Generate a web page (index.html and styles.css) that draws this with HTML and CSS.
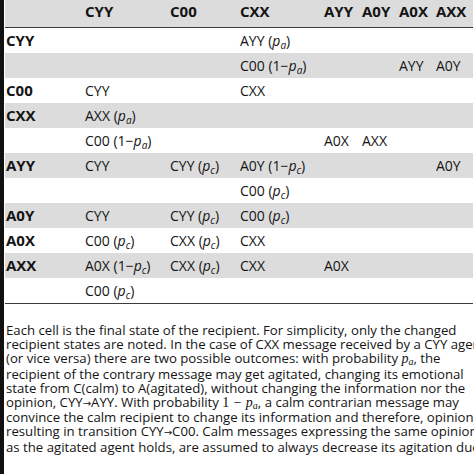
FILE: index.html
```html
<!DOCTYPE html>
<html>
<head>
<meta charset="utf-8">
<link rel="stylesheet" href="styles.css">
</head>
<body>
<div class="page">
  <div class="edge"></div>
  <div class="content">
    <table class="states">
      <colgroup>
        <col class="c0"><col class="c1"><col class="c2"><col class="c3"><col class="c4"><col class="c5"><col class="c6"><col class="c7">
      </colgroup>
      <thead>
        <tr><th></th><th>CYY</th><th>C00</th><th>CXX</th><th>AYY</th><th>A0Y</th><th>A0X</th><th>AXX</th></tr>
      </thead>
      <tbody>
        <tr><th>CYY</th><td></td><td></td><td>AYY (<i>p<sub>a</sub></i>)</td><td></td><td></td><td></td><td></td></tr>
        <tr class="g"><th></th><td></td><td></td><td>C00 (1−<i>p<sub>a</sub></i>)</td><td></td><td></td><td>AYY</td><td>A0Y</td></tr>
        <tr><th>C00</th><td>CYY</td><td></td><td>CXX</td><td></td><td></td><td></td><td></td></tr>
        <tr class="g"><th>CXX</th><td>AXX (<i>p<sub>a</sub></i>)</td><td></td><td></td><td></td><td></td><td></td><td></td></tr>
        <tr><th></th><td>C00 (1−<i>p<sub>a</sub></i>)</td><td></td><td></td><td>A0X</td><td>AXX</td><td></td><td></td></tr>
        <tr class="g"><th>AYY</th><td>CYY</td><td>CYY (<i>p<sub>c</sub></i>)</td><td>A0Y (1−<i>p<sub>c</sub></i>)</td><td></td><td></td><td></td><td>A0Y</td></tr>
        <tr><th></th><td></td><td></td><td>C00 (<i>p<sub>c</sub></i>)</td><td></td><td></td><td></td><td></td></tr>
        <tr class="g"><th>A0Y</th><td>CYY</td><td>CYY (<i>p<sub>c</sub></i>)</td><td>C00 (<i>p<sub>c</sub></i>)</td><td></td><td></td><td></td><td></td></tr>
        <tr><th>A0X</th><td>C00 (<i>p<sub>c</sub></i>)</td><td>CXX (<i>p<sub>c</sub></i>)</td><td>CXX</td><td></td><td></td><td></td><td></td></tr>
        <tr class="g"><th>AXX</th><td>A0X (1−<i>p<sub>c</sub></i>)</td><td>CXX (<i>p<sub>c</sub></i>)</td><td>CXX</td><td>A0X</td><td></td><td></td><td></td></tr>
        <tr><th></th><td>C00 (<i>p<sub>c</sub></i>)</td><td></td><td></td><td></td><td></td><td></td><td></td></tr>
      </tbody>
    </table>
    <p class="caption">Each cell is the final state of the recipient. For simplicity, only the changed<br>recipient states are noted. In the case of CXX message received by a CYY agent<br>(or vice versa) there are two possible outcomes: with probability <span class="m">p<sub>a</sub></span>, the<br>recipient of the contrary message may get agitated, changing its emotional<br>state from C(calm) to A(agitated), without changing the information nor the<br>opinion, CYY<span class="arr">→</span>AYY. With probability <span class="m"><span class="up">1</span> − p<sub>a</sub></span>, a calm contrarian message may<br>convince the calm recipient to change its information and therefore, opinion,<br>resulting in transition CYY<span class="arr">→</span>C00. Calm messages expressing the same opinion<br>as the agitated agent holds, are assumed to always decrease its agitation due to</p>
  </div>
</div>
</body>
</html>
```

FILE: styles.css
```css
html, body {
  margin: 0;
  padding: 0;
  background: #ffffff;
  overflow: hidden;
}
.page {
  display: flex;
  width: 520px;
  height: 474px;
  font-family: "Open Sans", "DejaVu Sans", sans-serif;
  color: #141414;
}
.edge {
  width: 4px;
  background: #111111;
  flex: none;
}
.content {
  padding-left: 1px;
  flex: none;
  width: 510px;
}
.states {
  border-collapse: collapse;
  table-layout: fixed;
  width: 468px;
  font-size: 14px;
  border-bottom: 1.5px solid #3c3c3c;
}
.c0 { width: 79px; }
.c1 { width: 85px; }
.c2 { width: 70px; }
.c3 { width: 84px; }
.c4 { width: 38px; }
.c5 { width: 37px; }
.c6 { width: 37px; }
.c7 { width: 38px; }
.states th, .states td {
  padding: 0 0 0 1px;
  text-align: left;
  white-space: nowrap;
  height: 25px;
  line-height: 25px;
  font-weight: 400;
}
.states th {
  font-size: 15px;
  font-weight: 700;
}
.states thead th {
  background: #dcdcdc;
  height: 22px;
  line-height: 22px;
  padding-bottom: 5px;
  border-bottom: 1.5px solid #3c3c3c;
}
.states tr.g th, .states tr.g td {
  background: #dcdcdc;
}
.states i {
  font-style: italic;
}
.states sub {
  font-size: 10px;
  line-height: 0;
  vertical-align: -3px;
}
.caption {
  margin: 19px 0 0 1px;
  font-size: 13.2px;
  line-height: 14.2px;
  white-space: nowrap;
}
.caption .m {
  font-family: "Liberation Serif", "DejaVu Serif", serif;
  font-style: italic;
  font-size: 14px;
}
.caption .m .up {
  font-style: normal;
}
.caption .m sub {
  font-size: 10px;
  line-height: 0;
  vertical-align: -2px;
}
.caption .arr {
  font-size: 10px;
}
```
